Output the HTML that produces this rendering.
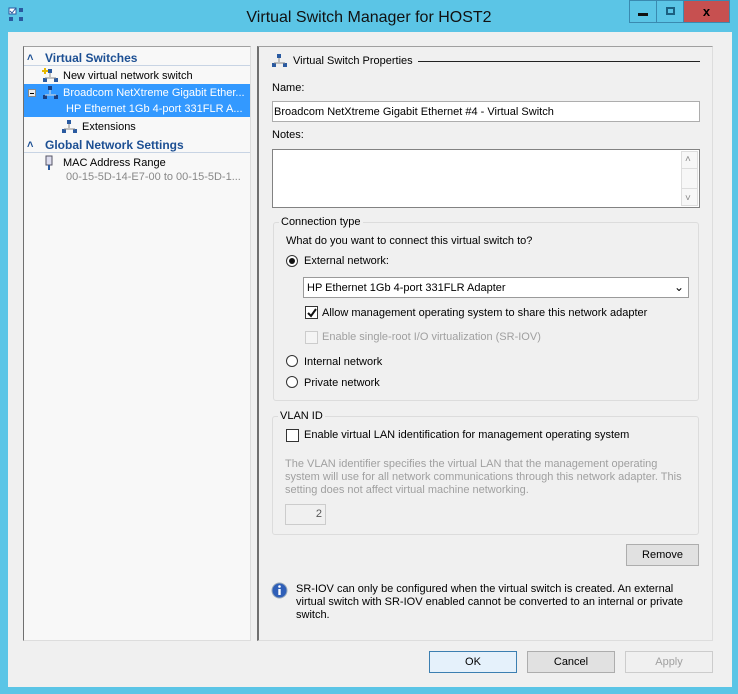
<!DOCTYPE html>
<html><head><meta charset="utf-8"><style>
*{margin:0;padding:0;box-sizing:border-box}
body{width:738px;height:694px;background:#5bc5e6;font-family:"Liberation Sans",sans-serif;font-size:11px;line-height:15px;color:#000;position:relative;overflow:hidden}
.a{position:absolute;white-space:nowrap}
.t{margin-top:2px}
.client{position:absolute;left:8px;top:32px;width:724px;height:655px;background:#f0f0f0}
.box{position:absolute;border:1px solid #adadad;background:#fff}
.gb{position:absolute;border:1px solid #dcdcdc;border-radius:3px}
.gl{position:absolute;background:#f0f0f0;padding:0 2px}
.btn{position:absolute;border:1px solid #adadad;background:#e1e1e1;text-align:center;line-height:21px;height:22px}
.rad{position:absolute;width:12px;height:12px;border:1px solid #333;border-radius:50%;background:#fff}
.chk{position:absolute;width:13px;height:13px;border:1px solid #333;background:#fff}
.gray{color:#a0a0a0}
</style></head><body>
<div class="client"></div>
<svg class="a" style="left:8px;top:6px" width="20" height="18"><rect x="1" y="2" width="7" height="6" fill="#fff" stroke="#2a5aa0"/><path d="M2 5l2 2 4-5" stroke="#2a5aa0" fill="none"/><rect x="11" y="2" width="4" height="4" fill="#2a5aa0"/><rect x="1" y="11" width="4" height="4" fill="#2a5aa0"/><rect x="11" y="11" width="4" height="4" fill="#2a5aa0"/></svg>
<div class="a" style="left:0;width:738px;top:8px;text-align:center;font-size:16px;line-height:19px;color:#111">Virtual Switch Manager for HOST2</div>
<div class="a" style="left:629px;top:0;width:28px;height:23px;border:1px solid #3a8ab0;"><div class="a" style="left:8px;top:12px;width:10px;height:3px;background:#111"></div></div>
<div class="a" style="left:656px;top:0;width:28px;height:23px;border:1px solid #3a8ab0;"><div class="a" style="left:9px;top:6px;width:9px;height:8px;border:2px solid #1b5f80"></div></div>
<div class="a" style="left:683px;top:0;width:47px;height:23px;background:#c75050;border:1px solid #3a8ab0;text-align:center;font-weight:bold;font-size:13px;line-height:22px">x</div>

<!-- left panel -->
<div class="a" style="left:23px;top:46px;width:228px;height:595px;background:#f8f8f8;border-left:1px solid #707070;border-top:1px solid #a0a0a0;border-bottom:1px solid #ddd;border-right:1px solid #ddd"></div>
<div class="a" style="left:27px;top:51px;color:#1c4f93;font-weight:bold;font-size:11px">&#708;</div>
<div class="a t" style="left:45px;top:49px;color:#1c4f93;font-weight:bold;font-size:12px">Virtual Switches</div>
<div class="a" style="left:24px;top:65px;width:226px;height:1px;background:#c8d4e4"></div>
<svg class="a" style="left:42px;top:68px" width="18" height="16"><rect x="6" y="1" width="4" height="4" fill="#2a5aa0"/><rect x="1" y="10" width="4" height="4" fill="#2a5aa0"/><rect x="12" y="10" width="4" height="4" fill="#2a5aa0"/><path d="M8 5v4M3 10h11" stroke="#888"/><path d="M3 0v6M0 3h6" stroke="#e8b800" stroke-width="2"/></svg>
<div class="a t" style="left:63px;top:67px">New virtual network switch</div>
<div class="a" style="left:24px;top:84px;width:226px;height:33px;background:#3399ff"></div>
<div class="a" style="left:28px;top:89px;width:8px;height:8px;background:#eee;border:1px solid #888"><div class="a" style="left:1px;top:3px;width:4px;height:1px;background:#000"></div></div>
<svg class="a" style="left:42px;top:85px" width="18" height="16"><rect x="6" y="1" width="4" height="4" fill="#1a3f80"/><rect x="1" y="10" width="4" height="4" fill="#1a3f80"/><rect x="12" y="10" width="4" height="4" fill="#1a3f80"/><path d="M8 5v4M3 10h11" stroke="#ddd"/></svg>
<div class="a t" style="left:63px;top:84px;color:#fff">Broadcom NetXtreme Gigabit Ether...</div>
<div class="a t" style="left:66px;top:100px;color:#fff">HP Ethernet 1Gb 4-port 331FLR A...</div>
<svg class="a" style="left:61px;top:119px" width="18" height="16"><rect x="6" y="1" width="4" height="4" fill="#2a5aa0"/><rect x="1" y="10" width="4" height="4" fill="#2a5aa0"/><rect x="12" y="10" width="4" height="4" fill="#2a5aa0"/><path d="M8 5v4M3 10h11" stroke="#888"/></svg>
<div class="a t" style="left:82px;top:118px">Extensions</div>
<div class="a" style="left:27px;top:138px;color:#1c4f93;font-weight:bold;font-size:11px">&#708;</div>
<div class="a t" style="left:45px;top:136px;color:#1c4f93;font-weight:bold;font-size:12px">Global Network Settings</div>
<div class="a" style="left:24px;top:152px;width:226px;height:1px;background:#c8d4e4"></div>
<svg class="a" style="left:44px;top:155px" width="10" height="16"><rect x="2" y="1" width="6" height="9" fill="#dde" stroke="#556"/><path d="M5 10v5" stroke="#2a5aa0" stroke-width="2"/></svg>
<div class="a t" style="left:63px;top:154px">MAC Address Range</div>
<div class="a t" style="left:66px;top:168px;color:#888">00-15-5D-14-E7-00 to 00-15-5D-1...</div>

<!-- right panel -->
<div class="a" style="left:257px;top:46px;width:456px;height:595px;border-left:2px solid #707070;border-top:1px solid #a0a0a0;border-right:1px solid #ddd;border-bottom:1px solid #ddd"></div>
<svg class="a" style="left:271px;top:53px" width="18" height="16"><rect x="6" y="1" width="4" height="4" fill="#2a5aa0"/><rect x="1" y="10" width="4" height="4" fill="#2a5aa0"/><rect x="12" y="10" width="4" height="4" fill="#2a5aa0"/><path d="M8 5v4M3 10h11" stroke="#888"/></svg>
<div class="a t" style="left:293px;top:52px">Virtual Switch Properties</div>
<div class="a" style="left:418px;top:61px;width:282px;height:1px;background:#222"></div>
<div class="a t" style="left:272px;top:79px">Name:</div>
<div class="box" style="left:272px;top:101px;width:428px;height:21px"><div class="a" style="left:1px;top:3px">Broadcom NetXtreme Gigabit Ethernet #4 - Virtual Switch</div></div>
<div class="a t" style="left:272px;top:126px">Notes:</div>
<div class="box" style="left:272px;top:149px;width:428px;height:59px;border-color:#828282"><div class="a" style="left:408px;top:1px;width:17px;height:55px;border:1px solid #ddd;background:#f7f7f7"></div><div class="a" style="left:412px;top:2px;color:#888;font-size:10px">&#708;</div><div class="a" style="left:412px;top:41px;color:#888;font-size:10px">&#709;</div><div class="a" style="left:409px;top:18px;width:15px;height:1px;background:#ddd"></div><div class="a" style="left:409px;top:38px;width:15px;height:1px;background:#ddd"></div></div>

<div class="gb" style="left:273px;top:222px;width:426px;height:179px"></div>
<div class="gl" style="left:279px;top:215px">Connection type</div>
<div class="a t" style="left:286px;top:232px">What do you want to connect this virtual switch to?</div>
<div class="rad" style="left:286px;top:255px"><div class="a" style="left:2px;top:2px;width:6px;height:6px;border-radius:50%;background:#111"></div></div>
<div class="a t" style="left:304px;top:252px">External network:</div>
<div class="box" style="left:303px;top:277px;width:386px;height:21px;border-color:#9a9a9a"><div class="a" style="left:3px;top:3px">HP Ethernet 1Gb 4-port 331FLR Adapter</div><div class="a" style="left:370px;top:2px;font-size:12px">&#8964;</div></div>
<div class="chk" style="left:305px;top:306px"><svg class="a" style="left:1px;top:1px" width="10" height="10"><path d="M1 5l3 3 5-7" stroke="#111" stroke-width="2" fill="none"/></svg></div>
<div class="a t" style="left:322px;top:304px">Allow management operating system to share this network adapter</div>
<div class="chk" style="left:305px;top:331px;border-color:#ccc;background:#f4f4f4"></div>
<div class="a t gray" style="left:322px;top:328px">Enable single-root I/O virtualization (SR-IOV)</div>
<div class="rad" style="left:286px;top:355px"></div>
<div class="a t" style="left:304px;top:353px">Internal network</div>
<div class="rad" style="left:286px;top:376px"></div>
<div class="a t" style="left:304px;top:374px">Private network</div>

<div class="gb" style="left:272px;top:416px;width:427px;height:119px"></div>
<div class="gl" style="left:278px;top:409px">VLAN ID</div>
<div class="chk" style="left:286px;top:429px"></div>
<div class="a t" style="left:304px;top:426px">Enable virtual LAN identification for management operating system</div>
<div class="a gray" style="left:285px;top:458px;line-height:13px">The VLAN identifier specifies the virtual LAN that the management operating<br>system will use for all network communications through this network adapter. This<br>setting does not affect virtual machine networking.</div>
<div class="a" style="left:285px;top:504px;width:41px;height:21px;border:1px solid #ccc;text-align:right;padding-right:3px;line-height:19px;color:#555">2</div>

<div class="btn" style="left:626px;top:544px;width:73px">Remove</div>
<svg class="a" style="left:271px;top:582px" width="17" height="17"><circle cx="8.5" cy="8.5" r="7.5" fill="#2f5fb8" stroke="#9ab"/><circle cx="8.5" cy="4.5" r="1.3" fill="#fff"/><rect x="7.3" y="7" width="2.4" height="6" fill="#fff"/></svg>
<div class="a" style="left:296px;top:583px;line-height:13px">SR-IOV can only be configured when the virtual switch is created. An external<br>virtual switch with SR-IOV enabled cannot be converted to an internal or private<br>switch.</div>

<div class="btn" style="left:429px;top:651px;width:88px;border-color:#3c7fb1;background:#e5f1fb">OK</div>
<div class="btn" style="left:527px;top:651px;width:88px">Cancel</div>
<div class="btn gray" style="left:625px;top:651px;width:88px;background:#f0f0f0;border-color:#ccc">Apply</div>
</body></html>
